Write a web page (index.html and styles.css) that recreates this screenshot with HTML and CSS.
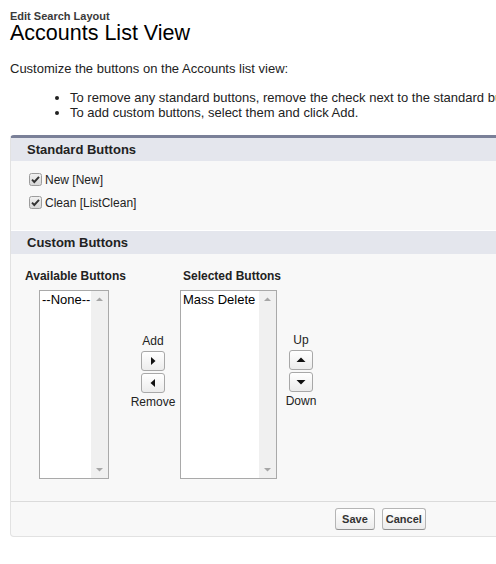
FILE: index.html
```html
<!DOCTYPE html>
<html>
<head>
<meta charset="utf-8">
<title>Accounts List View</title>
<link rel="stylesheet" href="styles.css">
</head>
<body>
<div class="page">
  <div class="crumb">Edit Search Layout</div>
  <h1 class="title">Accounts List View</h1>
  <p class="intro">Customize the buttons on the Accounts list view:</p>
  <ul class="tips">
    <li>To remove any standard buttons, remove the check next to the standard button name.</li>
    <li>To add custom buttons, select them and click Add.</li>
  </ul>

  <div class="panel">
    <div class="sub-head">Standard Buttons</div>
    <div class="std-body">
      <label class="chk-row"><span class="chk"><svg width="13" height="13" viewBox="0 0 13 13"><defs><linearGradient id="cg" x1="0" y1="0" x2="0" y2="1"><stop offset="0" stop-color="#f2f2f2"/><stop offset="1" stop-color="#d6d6d6"/></linearGradient></defs><rect x="0.5" y="0.5" width="12" height="12" rx="2" fill="url(#cg)" stroke="#9c9c9c"/><path d="M3 6.6 L5.3 9 L10 3.8" fill="none" stroke="#333" stroke-width="1.9"/></svg></span>New [New]</label>
      <label class="chk-row"><span class="chk"><svg width="13" height="13" viewBox="0 0 13 13"><rect x="0.5" y="0.5" width="12" height="12" rx="2" fill="url(#cg)" stroke="#9c9c9c"/><path d="M3 6.6 L5.3 9 L10 3.8" fill="none" stroke="#333" stroke-width="1.9"/></svg></span>Clean [ListClean]</label>
    </div>

    <div class="sub-head sub-head-split">Custom Buttons</div>
    <div class="custom-body">
      <div class="col col-avail">
        <div class="col-label">Available Buttons</div>
        <div class="listbox listbox-avail">
          <div class="list-items"><div class="opt">--None--</div></div>
          <div class="gutter">
            <svg width="17" height="12" viewBox="0 0 17 12"><path d="M5 8 L8.5 4.5 L12 8 Z" fill="#a6a6a6"/></svg>
            <svg width="17" height="12" viewBox="0 0 17 12"><path d="M5 4 L8.5 7.5 L12 4 Z" fill="#a6a6a6"/></svg>
          </div>
        </div>
      </div>

      <div class="col col-move">
        <div class="mv-label">Add</div>
        <button class="arrow-btn" type="button"><svg width="8" height="10" viewBox="0 0 8 10"><path d="M2 1 L6.5 5 L2 9 Z" fill="#111"/></svg></button>
        <button class="arrow-btn" type="button"><svg width="8" height="10" viewBox="0 0 8 10"><path d="M6 1 L1.5 5 L6 9 Z" fill="#111"/></svg></button>
        <div class="mv-label mv-label-bottom">Remove</div>
      </div>

      <div class="col col-sel">
        <div class="col-label col-label-sel">Selected Buttons</div>
        <div class="listbox listbox-sel">
          <div class="list-items"><div class="opt">Mass Delete</div></div>
          <div class="gutter">
            <svg width="17" height="12" viewBox="0 0 17 12"><path d="M5 8 L8.5 4.5 L12 8 Z" fill="#a6a6a6"/></svg>
            <svg width="17" height="12" viewBox="0 0 17 12"><path d="M5 4 L8.5 7.5 L12 4 Z" fill="#a6a6a6"/></svg>
          </div>
        </div>
      </div>

      <div class="col col-move col-order">
        <div class="mv-label">Up</div>
        <button class="arrow-btn" type="button"><svg width="10" height="8" viewBox="0 0 10 8"><path d="M0.5 6 L5 1.5 L9.5 6 Z" fill="#111"/></svg></button>
        <button class="arrow-btn" type="button"><svg width="10" height="8" viewBox="0 0 10 8"><path d="M0.5 2 L5 6.5 L9.5 2 Z" fill="#111"/></svg></button>
        <div class="mv-label mv-label-bottom">Down</div>
      </div>
    </div>

    <div class="panel-foot">
      <button class="btn btn-save" type="button">Save</button>
      <button class="btn" type="button">Cancel</button>
    </div>
  </div>
</div>
</body>
</html>
```

FILE: styles.css
```css
html, body {
  margin: 0;
  padding: 0;
  overflow: hidden;
  background: #ffffff;
}

body {
  font-family: "Liberation Sans", Arial, sans-serif;
  color: #222222;
}

.page {
  padding: 10px 0 0 10px;
  width: 760px;
}

.crumb {
  font-size: 11px;
  font-weight: bold;
  line-height: 13px;
  color: #3a3a3a;
}

.title {
  margin: 0;
  font-size: 21.5px;
  font-weight: normal;
  line-height: 20px;
  color: #000000;
}

.intro {
  margin: 18px 0 0 0;
  font-size: 13px;
  line-height: 15px;
}

.tips {
  margin: 14px 0 0 0;
  padding: 0 0 0 60px;
  font-size: 13px;
  line-height: 15px;
  white-space: nowrap;
}

.panel {
  margin-top: 15px;
  width: 741px;
  box-sizing: border-box;
  background: #f8f8f8;
  border: 1px solid #e2e2e2;
  border-top: 3px solid #7a8098;
  border-radius: 4px;
}

.sub-head {
  height: 23px;
  line-height: 23px;
  padding-left: 16px;
  background: #e4e6ed;
  font-size: 13px;
  font-weight: bold;
  color: #222222;
}

.sub-head-split {
  border-top: 1px solid #ffffff;
}

.std-body {
  padding: 7px 0 16px 18px;
}

.chk-row {
  display: flex;
  align-items: center;
  height: 23px;
  font-size: 12px;
  color: #222222;
}

.chk {
  display: inline-flex;
  width: 13px;
  height: 13px;
  margin-right: 3px;
}

.custom-body {
  display: flex;
  align-items: flex-start;
  padding: 15px 0 22px 14px;
}

.col-avail {
  width: 101px;
}

.col-label {
  font-size: 12px;
  font-weight: bold;
  line-height: 15px;
  margin-bottom: 6px;
  white-space: nowrap;
}

.col-label-sel {
  padding-left: 3px;
}

.listbox {
  display: flex;
  height: 189px;
  box-sizing: border-box;
  border: 1px solid #a9a9a9;
  background: #ffffff;
}

.listbox-avail {
  width: 70px;
  margin-left: 14px;
}

.listbox-sel {
  width: 97px;
}

.list-items {
  flex: 1;
  padding: 1px 0 0 2px;
  overflow: hidden;
}

.opt {
  font-size: 13px;
  line-height: 15px;
  white-space: nowrap;
  color: #000000;
}

.gutter {
  width: 17px;
  background: #f0f0f0;
  display: flex;
  flex-direction: column;
  justify-content: space-between;
  padding: 2px 0 2px 0;
}

.gutter svg {
  display: block;
}

.col-move {
  width: 46px;
  margin-left: 4px;
  padding-top: 65px;
  display: flex;
  flex-direction: column;
  align-items: center;
}

.col-sel {
  width: 103px;
  margin-left: 4px;
}

.col-order {
  width: 36px;
  margin-left: 0;
  padding-top: 64px;
}

.mv-label {
  font-size: 12px;
  line-height: 14px;
  color: #222222;
  margin-bottom: 3px;
}

.mv-label-bottom {
  margin: 0;
}

.arrow-btn {
  width: 24px;
  height: 20px;
  margin: 0 0 2px 0;
  padding: 0;
  display: flex;
  align-items: center;
  justify-content: center;
  border: 1px solid #a8a8a8;
  border-radius: 3px;
  background: linear-gradient(#ffffff, #ececec);
}

.panel-foot {
  border-top: 1px solid #dbdbdb;
  padding: 6px 0 6px 0;
  display: flex;
  justify-content: center;
  gap: 7px;
}

.btn {
  height: 22px;
  padding: 0 3px;
  font-family: "Liberation Sans", Arial, sans-serif;
  font-size: 11px;
  font-weight: bold;
  color: #333333;
  border: 1px solid #b5b5b5;
  border-bottom-color: #8f8f8f;
  border-radius: 3px;
  background: linear-gradient(#ffffff, #ececec);
}

.btn-save {
  padding: 0 6px;
}
```
